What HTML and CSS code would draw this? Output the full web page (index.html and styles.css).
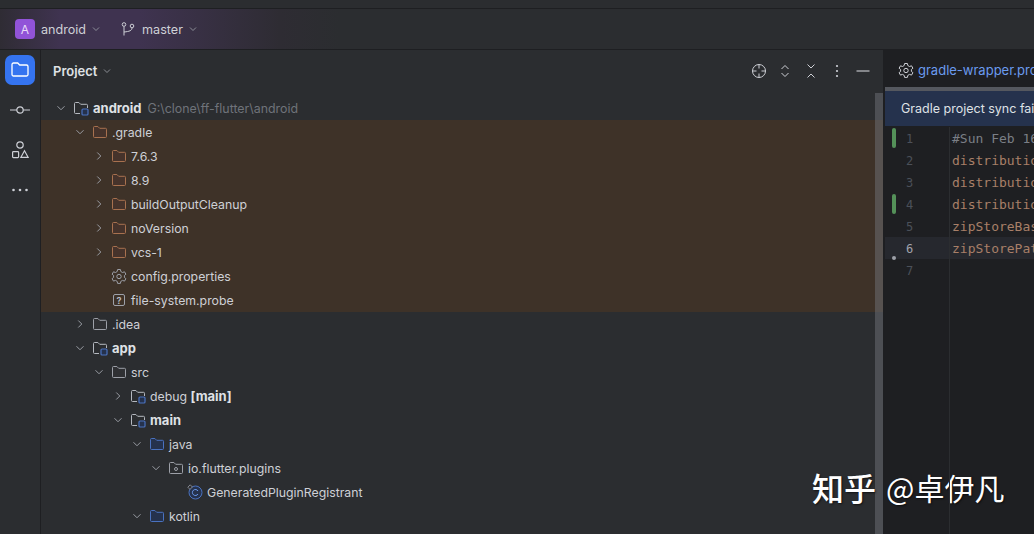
FILE: index.html
```html
<!DOCTYPE html>
<html lang="en">
<head>
<meta charset="utf-8">
<title>android</title>
<link rel="stylesheet" href="styles.css">
</head>
<body>
<svg class="defs" width="0" height="0" aria-hidden="true">
  <symbol id="chev-r" viewBox="0 0 16 16"><path d="M6 4l4 4-4 4" fill="none" stroke="currentColor" stroke-width="1.1"/></symbol>
  <symbol id="chev-d" viewBox="0 0 16 16"><path d="M4 6l4 4 4-4" fill="none" stroke="currentColor" stroke-width="1.1"/></symbol>
  <symbol id="folder" viewBox="0 0 16 16"><path d="M1.5 3.5a1 1 0 0 1 1-1h3.4l1.8 1.8h5.800a1 1 0 0 1 1 1v7.200a1 1 0 0 1-1 1h-11a1 1 0 0 1-1-1z" fill="var(--ff,#2f3033)" stroke="var(--fs,#9da0a8)"/></symbol>
  <symbol id="module" viewBox="0 0 16 16"><path d="M7 13.500H2.500a1 1 0 0 1-1-1v-9a1 1 0 0 1 1-1h3.400l1.800 1.800h5.800a1 1 0 0 1 1 1V8" fill="none" stroke="#b4b8bf"/><rect x="9" y="9" width="6" height="6" rx="1" fill="#25324d" stroke="#4a72c0" stroke-width="1.2"/></symbol>
  <symbol id="package" viewBox="0 0 16 16"><path d="M1.500 3.500a1 1 0 0 1 1-1h3.400l1.800 1.800h5.800a1 1 0 0 1 1 1v7.200a1 1 0 0 1-1 1h-11a1 1 0 0 1-1-1z" fill="none" stroke="#9da0a8"/><circle cx="8" cy="9" r="1.500" fill="none" stroke="#9da0a8"/></symbol>
  <symbol id="gear" viewBox="0 0 16 16"><path d="M6.600 1.500h2.800l.4 2 1.700 1 2-.7 1.400 2.400-1.500 1.300v1.900l1.500 1.300-1.400 2.400-2-.7-1.700 1-.4 2H6.600l-.4-2-1.700-1-2 .7-1.400-2.400 1.500-1.300V7.500L1.100 6.200l1.400-2.400 2 .7 1.700-1z" fill="none" stroke="currentColor"/><circle cx="8" cy="8.500" r="2.200" fill="none" stroke="currentColor"/></symbol>
</svg>
<div class="app">
  <div class="strip"></div>
  <header class="titlebar">
    <span class="badge">A</span>
    <span class="tb-label">android</span>
    <svg class="tb-chev"><use href="#chev-d"/></svg>
    <svg class="branch" viewBox="0 0 16 16"><g fill="none" stroke="#ced0d6"><circle cx="4" cy="3.500" r="1.800"/><circle cx="12" cy="5" r="1.800"/><path d="M4 5.500v9M12 7c0 2.500-2.500 3.500-8 4"/></g></svg>
    <span class="tb-label">master</span>
    <svg class="tb-chev tb-chev-b"><use href="#chev-d"/></svg>
  </header>
  <div class="main">
    <nav class="rail">
      <span class="rail-btn active"><svg viewBox="0 0 20 20"><path d="M2 4.500a1.500 1.500 0 0 1 1.500-1.500h4.200l2 2h6.800A1.500 1.500 0 0 1 18 6.500v8a1.500 1.500 0 0 1-1.500 1.500h-13A1.500 1.500 0 0 1 2 14.500z" fill="none" stroke="#fff" stroke-width="1.300"/></svg></span>
      <span class="rail-btn"><svg viewBox="0 0 20 20"><g fill="none" stroke="#ced0d6" stroke-width="1.200"><circle cx="10" cy="10" r="3.200"/><path d="M0 10h6.800M13.200 10H20"/></g></svg></span>
      <span class="rail-btn"><svg viewBox="0 0 20 20"><g fill="none" stroke="#ced0d6" stroke-width="1.200"><circle cx="10" cy="5" r="3.200"/><rect x="2.600" y="11.600" width="6" height="6" rx=".8"/><path d="M14.500 10.800l3.600 6.500h-7.200z"/></g></svg></span>
      <span class="rail-btn"><svg viewBox="0 0 20 20"><g fill="#ced0d6"><circle cx="3.500" cy="10" r="1.300"/><circle cx="10" cy="10" r="1.300"/><circle cx="16.500" cy="10" r="1.300"/></g></svg></span>
    </nav>
    <section class="panel">
      <div class="panel-head">
        <strong class="panel-title">Project</strong>
        <svg class="head-chev"><use href="#chev-d"/></svg>
        <div class="head-tools">
          <svg viewBox="0 0 16 16"><g fill="none" stroke="#ced0d6"><circle cx="8" cy="8" r="6.500"/><path d="M8 1.500v4M8 10.500v4M1.500 8h4M10.500 8h4"/></g></svg>
          <svg viewBox="0 0 16 16"><path d="M4.500 6L8 2.500 11.500 6M4.500 10L8 13.500 11.500 10" fill="none" stroke="#ced0d6"/></svg>
          <svg viewBox="0 0 16 16"><path d="M4.500 1.500L8 5l3.500-3.500M4.500 14.500L8 11l3.500 3.500" fill="none" stroke="#ced0d6"/></svg>
          <svg viewBox="0 0 16 16"><g fill="#ced0d6"><circle cx="8" cy="3" r="1.100"/><circle cx="8" cy="8" r="1.100"/><circle cx="8" cy="13" r="1.100"/></g></svg>
          <svg viewBox="0 0 16 16"><path d="M1.500 8h13" stroke="#ced0d6" stroke-width="1.100"/></svg>
        </div>
      </div>
      <ul class="tree">
        <li class="row l0"><svg class="chev"><use href="#chev-d"/></svg><svg class="ico"><use href="#module"/></svg><b>android</b><span class="path">G:\clone\ff-flutter\android</span></li>
        <li class="row l1 ex"><svg class="chev"><use href="#chev-d"/></svg><svg class="ico"><use href="#folder"/></svg>.gradle</li>
        <li class="row l2 ex"><svg class="chev"><use href="#chev-r"/></svg><svg class="ico"><use href="#folder"/></svg>7.6.3</li>
        <li class="row l2 ex"><svg class="chev"><use href="#chev-r"/></svg><svg class="ico"><use href="#folder"/></svg>8.9</li>
        <li class="row l2 ex"><svg class="chev"><use href="#chev-r"/></svg><svg class="ico"><use href="#folder"/></svg>buildOutputCleanup</li>
        <li class="row l2 ex"><svg class="chev"><use href="#chev-r"/></svg><svg class="ico"><use href="#folder"/></svg>noVersion</li>
        <li class="row l2 ex"><svg class="chev"><use href="#chev-r"/></svg><svg class="ico"><use href="#folder"/></svg>vcs-1</li>
        <li class="row l2 ex"><span class="chev"></span><svg class="ico gear"><use href="#gear"/></svg>config.properties</li>
        <li class="row l2 ex"><span class="chev"></span><svg class="ico" viewBox="0 0 16 16"><rect x="2.500" y="2.500" width="11" height="11" rx="1.500" fill="none" stroke="#9da0a8"/><text x="8" y="11.500" class="q">?</text></svg>file-system.probe</li>
        <li class="row l1"><svg class="chev"><use href="#chev-r"/></svg><svg class="ico"><use href="#folder"/></svg>.idea</li>
        <li class="row l1"><svg class="chev"><use href="#chev-d"/></svg><svg class="ico"><use href="#module"/></svg><b>app</b></li>
        <li class="row l2"><svg class="chev"><use href="#chev-d"/></svg><svg class="ico"><use href="#folder"/></svg>src</li>
        <li class="row l3"><svg class="chev"><use href="#chev-r"/></svg><svg class="ico"><use href="#module"/></svg>debug&nbsp;<b>[main]</b></li>
        <li class="row l3"><svg class="chev"><use href="#chev-d"/></svg><svg class="ico"><use href="#module"/></svg><b>main</b></li>
        <li class="row l4 src"><svg class="chev"><use href="#chev-d"/></svg><svg class="ico"><use href="#folder"/></svg>java</li>
        <li class="row l5"><svg class="chev"><use href="#chev-d"/></svg><svg class="ico"><use href="#package"/></svg>io.flutter.plugins</li>
        <li class="row l6"><span class="chev"></span><svg class="ico" viewBox="0 0 16 16"><circle cx="8.500" cy="8.500" r="6.500" fill="#25324d" stroke="#4a72c0"/><path d="M11 7a3 3 0 1 0 0 3" fill="none" stroke="#6b9bef"/><path d="M.8 3.200L3.200.8l2.200 2.200-2.400 2.400z" fill="#2b2d30" stroke="#9da0a8" stroke-width=".8"/></svg>GeneratedPluginRegistrant</li>
        <li class="row l4 src"><svg class="chev"><use href="#chev-d"/></svg><svg class="ico"><use href="#folder"/></svg>kotlin</li>
      </ul>
      <div class="scrollbar"></div>
    </section>
    <section class="editor">
      <div class="tabs">
        <svg class="tab-ico"><use href="#gear"/></svg>
        <span class="tab-name">gradle-wrapper.properties</span>
      </div>
      <div class="notice">Gradle project sync failed. Basic functionality will not work properly.</div>
      <div class="code">
        <div class="line"><i class="mark"></i><span class="num">1</span><span class="cmt">#Sun Feb 16 10:20:31 CST 2025</span></div>
        <div class="line"><span class="num">2</span><span class="key">distributionBase=GRADLE_USER_HOME</span></div>
        <div class="line"><span class="num">3</span><span class="key">distributionPath=wrapper/dists</span></div>
        <div class="line"><i class="mark"></i><span class="num">4</span><span class="key">distributionUrl=https\://services.gradle.org</span></div>
        <div class="line"><span class="num">5</span><span class="key">zipStoreBase=GRADLE_USER_HOME</span></div>
        <div class="line current"><i class="dot"></i><span class="num">6</span><span class="key">zipStorePath=wrapper/dists</span></div>
        <div class="line"><span class="num">7</span></div>
      </div>
    </section>
  </div>
  <div class="watermark"><span class="wm-logo">知乎</span> <span>@卓伊凡</span></div>
</div>
</body>
</html>
```
FILE: styles.css
```css
* { box-sizing: border-box; }
html, body { margin: 0; height: 100%; background: #2b2d30; overflow: hidden; }
body { font-family: Inter, "Noto Sans", sans-serif; font-size: 12.3px; color: #ced0d6; }
.defs { position: absolute; }
.app { position: relative; width: 1034px; height: 534px; display: flex; flex-direction: column; overflow: hidden; }
.strip { height: 9px; flex: none; background: #2b2d30; border-bottom: 1px solid #1e1f22; }
.titlebar {
  height: 41px; flex: none; display: flex; align-items: center; padding-left: 15px;
  border-bottom: 1px solid #1e1f22;
  background: linear-gradient(90deg, #2f2c34 0, #3f3350 60px, #3f3350 140px, #2e2c33 280px, #2b2d30 340px);
}
.badge {
  width: 20px; height: 20px; border-radius: 4px; background: #9153d8; color: #e9dcf8;
  display: flex; align-items: center; justify-content: center; font-size: 12px; margin-right: 6px;
}
.tb-label { color: #ced0d6; font-size: 12.6px; }
.tb-chev { width: 12px; height: 12px; margin-left: 4px; color: #9da0a8; }
.tb-chev-b { margin-left: 4px; }
.branch { width: 16px; height: 16px; margin: 0 6px 0 18px; }
.main { flex: 1; display: flex; min-height: 0; }
.rail { width: 41px; flex: none; border-right: 1px solid #1e1f22; display: flex; flex-direction: column; align-items: center; padding: 5px 0 0; gap: 10px; }
.rail-btn { width: 30px; height: 30px; margin-right: 1px; border-radius: 7px; display: flex; align-items: center; justify-content: center; }
.rail-btn svg { width: 20px; height: 20px; }
.rail-btn.active { background: #3574f0; }
.panel { position: relative; width: 844px; flex: none; background: #2b2d30; border-right: 2px solid #1e1f22; }
.panel-head { height: 42px; display: flex; align-items: center; padding: 0 12px 0; margin-bottom: 4px; }
.panel-title { font-size: 13px; font-weight: 600; color: #dfe1e5; }
.head-chev { width: 12px; height: 12px; margin-left: 4px; color: #9da0a8; }
.head-tools { margin-left: auto; display: flex; gap: 10px; }
.head-tools svg { width: 16px; height: 16px; }
.tree { list-style: none; margin: 0; padding: 0; }
.row { height: 24px; display: flex; align-items: center; white-space: nowrap; color: #ced0d6; }
.row b { font-size: 13px; font-weight: 700; color: #dfe1e5; }
.row.ex { background: #3e3228; --ff: #46332b; --fs: #a8714f; }
.row.src { --ff: #25324d; --fs: #4a72c0; }
.l0 { padding-left: 13px; }
.l1 { padding-left: 32px; }
.l2 { padding-left: 51px; }
.l3 { padding-left: 70px; }
.l4 { padding-left: 89px; }
.l5 { padding-left: 108px; }
.l6 { padding-left: 127px; }
.chev { width: 14px; height: 14px; flex: none; margin-right: 5px; color: #9da0a8; }
.ico { width: 16px; height: 16px; flex: none; margin-right: 4px; }
.ico.gear { color: #9da0a8; }
.q { font-size: 9px; font-weight: 700; fill: #b4b8bf; text-anchor: middle; font-family: Inter, sans-serif; }
.path { color: #6f737a; margin-left: 6px; font-size: 12.4px; }
.scrollbar { position: absolute; right: 0; top: 43px; bottom: 0; width: 8px; background: rgba(112, 114, 120, .5); }
.editor { flex: 1; min-width: 0; background: #1e1f22; overflow: hidden; display: flex; flex-direction: column; }
.tabs { height: 37px; flex: none; display: flex; align-items: center; padding: 3px 0 0 13px; white-space: nowrap; font-size: 13px; }
.tab-ico { width: 16px; height: 16px; color: #ced0d6; margin-right: 4px; flex: none; }
.tab-name { color: #6b9bef; }
.notice { height: 40px; flex: none; background: #25324d; border-top: 4px solid #55585f; border-bottom: 1px solid #1e1f22; padding-left: 16px; line-height: 35px; white-space: nowrap; color: #dfe1e5; font-size: 12.5px; }
.code { position: relative; flex: 1; font-family: "DejaVu Sans Mono", "Liberation Mono", monospace; font-size: 13px; }
.code::before { content: ""; position: absolute; left: 64px; top: 0; bottom: 0; width: 1px; background: #2b2d30; z-index: 1; }
.line { position: relative; height: 22px; line-height: 24px; white-space: nowrap; display: flex; }
.num { width: 65px; flex: none; padding-left: 21px; color: #4b5059; font-size: 12px; margin-right: 2px; }
.line.current { background: #26282e; }
.line.current .num { color: #a1a3ab; }
.cmt { color: #7a7e85; }
.key { color: #a87f68; }
.mark { position: absolute; left: 7px; top: 1px; width: 4px; height: 20px; border-radius: 2px; background: #549159; }
.dot { position: absolute; left: 7px; top: 19px; width: 4px; height: 4px; border-radius: 50%; background: #9da0a8; }
.watermark { position: absolute; left: 812px; top: 466px; display: flex; align-items: center; gap: 10px; font-family: "Noto Sans CJK SC", sans-serif; font-size: 30px; line-height: 42px; color: #fff; white-space: nowrap; text-shadow: 1px 1px 2px rgba(0,0,0,.6); }
.wm-logo { font-size: 32px; font-weight: 500; }
```
